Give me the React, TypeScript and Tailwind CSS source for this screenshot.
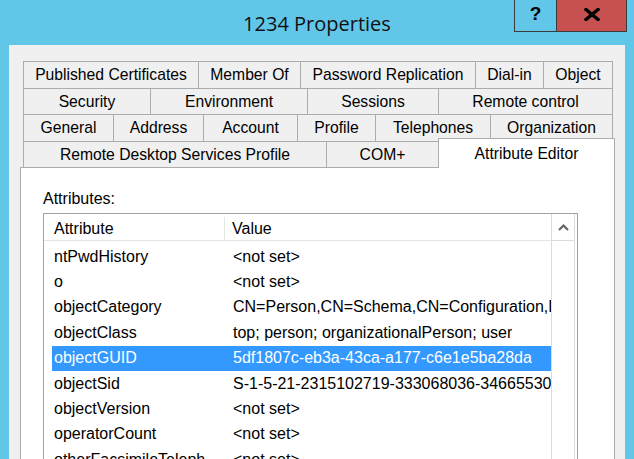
import React from "react";

type Tab = { label: string; w: string; last?: boolean };

const tabRows: { h: string; tabs: Tab[] }[] = [
  {
    h: "h-[27px]",
    tabs: [
      { label: "Published Certificates", w: "w-[175px]" },
      { label: "Member Of", w: "w-[102px]" },
      { label: "Password Replication", w: "w-[175px]" },
      { label: "Dial-in", w: "w-[68px]" },
      { label: "Object", w: "flex-1", last: true },
    ],
  },
  {
    h: "h-[26px]",
    tabs: [
      { label: "Security", w: "w-[127px]" },
      { label: "Environment", w: "w-[157px]" },
      { label: "Sessions", w: "w-[131px]" },
      { label: "Remote control", w: "flex-1", last: true },
    ],
  },
  {
    h: "h-[27px]",
    tabs: [
      { label: "General", w: "w-[90px]" },
      { label: "Address", w: "w-[90px]" },
      { label: "Account", w: "w-[94px]" },
      { label: "Profile", w: "w-[78px]" },
      { label: "Telephones", w: "w-[115px]" },
      { label: "Organization", w: "flex-1", last: true },
    ],
  },
];

const rows = [
  ["ntPwdHistory", "<not set>"],
  ["o", "<not set>"],
  ["objectCategory", "CN=Person,CN=Schema,CN=Configuration,DC=contoso,DC=com"],
  ["objectClass", "top; person; organizationalPerson; user"],
  ["objectGUID", "5df1807c-eb3a-43ca-a177-c6e1e5ba28da"],
  ["objectSid", "S-1-5-21-2315102719-333068036-3466553012-1107"],
  ["objectVersion", "<not set>"],
  ["operatorCount", "<not set>"],
  ["otherFacsimileTelephoneNumber", "<not set>"],
];

const TabButton = ({ tab }: { tab: Tab }) => (
  <div
    className={`${tab.w} shrink-0 flex items-center justify-center border-l border-t border-[#acacac] bg-[#f0f0f0] whitespace-nowrap ${
      tab.last ? "border-r" : ""
    }`}
  >
    {tab.label}
  </div>
);

export default function App() {
  return (
    <div className="w-[634px] h-[459px] overflow-hidden bg-[#62c6e9] font-['Liberation_Sans',Arial,sans-serif] text-[16px] leading-[18px] text-black">
      {/* title bar */}
      <div className="grid grid-cols-[1fr_auto_1fr] h-[45px]">
        <div />
        <div className="self-center font-['Open_Sans',sans-serif] text-[20px] leading-[26px] text-[#111] pt-[2px]">
          1234 Properties
        </div>
        <div className="justify-self-end self-start mr-[7px] flex h-[32px] border-x border-b border-[#3b3b3b]">
          <div className="w-[41px] flex items-center justify-center font-bold text-[19px] pb-[3px]">
            ?
          </div>
          <div className="w-[70px] border-l border-[#3b3b3b] bg-[#c75050] flex items-center justify-center pb-[2px]">
            <svg width="16" height="13" viewBox="0 0 16 13">
              <path d="M2 1.5 L14 11.5 M14 1.5 L2 11.5" stroke="#000" strokeWidth="3.4" strokeLinecap="square" />
            </svg>
          </div>
        </div>
      </div>

      {/* dialog body */}
      <div className="mx-[9px] h-[414px] bg-[#f0f0f0] pt-[16px] pl-[11px] pr-[10px]">
        <div className="ml-[3px] w-[590px] text-[15.7px]">
          {tabRows.map((r, i) => (
            <div key={i} className={`flex ${r.h}`}>
              {r.tabs.map((t) => (
                <TabButton key={t.label} tab={t} />
              ))}
            </div>
          ))}
          <div className="flex h-[26px]">
            <TabButton tab={{ label: "Remote Desktop Services Profile", w: "w-[303px]" }} />
            <TabButton tab={{ label: "COM+", w: "w-[112px]" }} />
            <div className="relative z-10 -mt-[3px] h-[30px] w-[177px] shrink-0 flex items-start justify-center pt-[6px] border-x border-t border-[#acacac] bg-white">
              Attribute Editor
            </div>
          </div>
        </div>

        {/* tab page */}
        <div className="h-[300px] border border-[#acacac] bg-white pt-[22px] pl-[22px]">
          <div>Attributes:</div>
          <div className="mt-[5px] w-[535px] h-[260px] border border-[#a3a3a3] flex overflow-hidden">
            <div className="flex-1 min-w-0 overflow-hidden">
              <div className="flex h-[27px] border-b border-[#e5e5e5] pt-[3px]">
                <div className="w-[181px] pl-[10px] border-r border-[#e5e5e5] flex items-center">
                  Attribute
                </div>
                <div className="pl-[7px] flex items-center">Value</div>
              </div>
              <div className="pt-[3px] pl-[8px]">
                {rows.map(([a, v]) => {
                  const sel = a === "objectGUID";
                  return (
                    <div
                      key={a}
                      className={`flex h-[25.4px] items-center whitespace-nowrap overflow-hidden ${
                        sel ? "bg-[#3399ff] text-white" : ""
                      }`}
                    >
                      <div className="w-[179px] shrink-0 pl-[2px] pr-[6px] overflow-hidden text-ellipsis">{a}</div>
                      <div className="min-w-0 pl-[2px] overflow-hidden">{v}</div>
                    </div>
                  );
                })}
              </div>
            </div>
            <div className="w-[24px] shrink-0 mr-[2px] border-x border-[#dcdcdc] bg-white">
              <div className="h-[27px] border-b border-[#dcdcdc] flex items-center justify-center">
                <svg width="11" height="7" viewBox="0 0 11 7">
                  <path d="M1 6 L5.5 1.5 L10 6" fill="none" stroke="#606060" strokeWidth="2" />
                </svg>
              </div>
            </div>
          </div>
        </div>
      </div>
    </div>
  );
}
